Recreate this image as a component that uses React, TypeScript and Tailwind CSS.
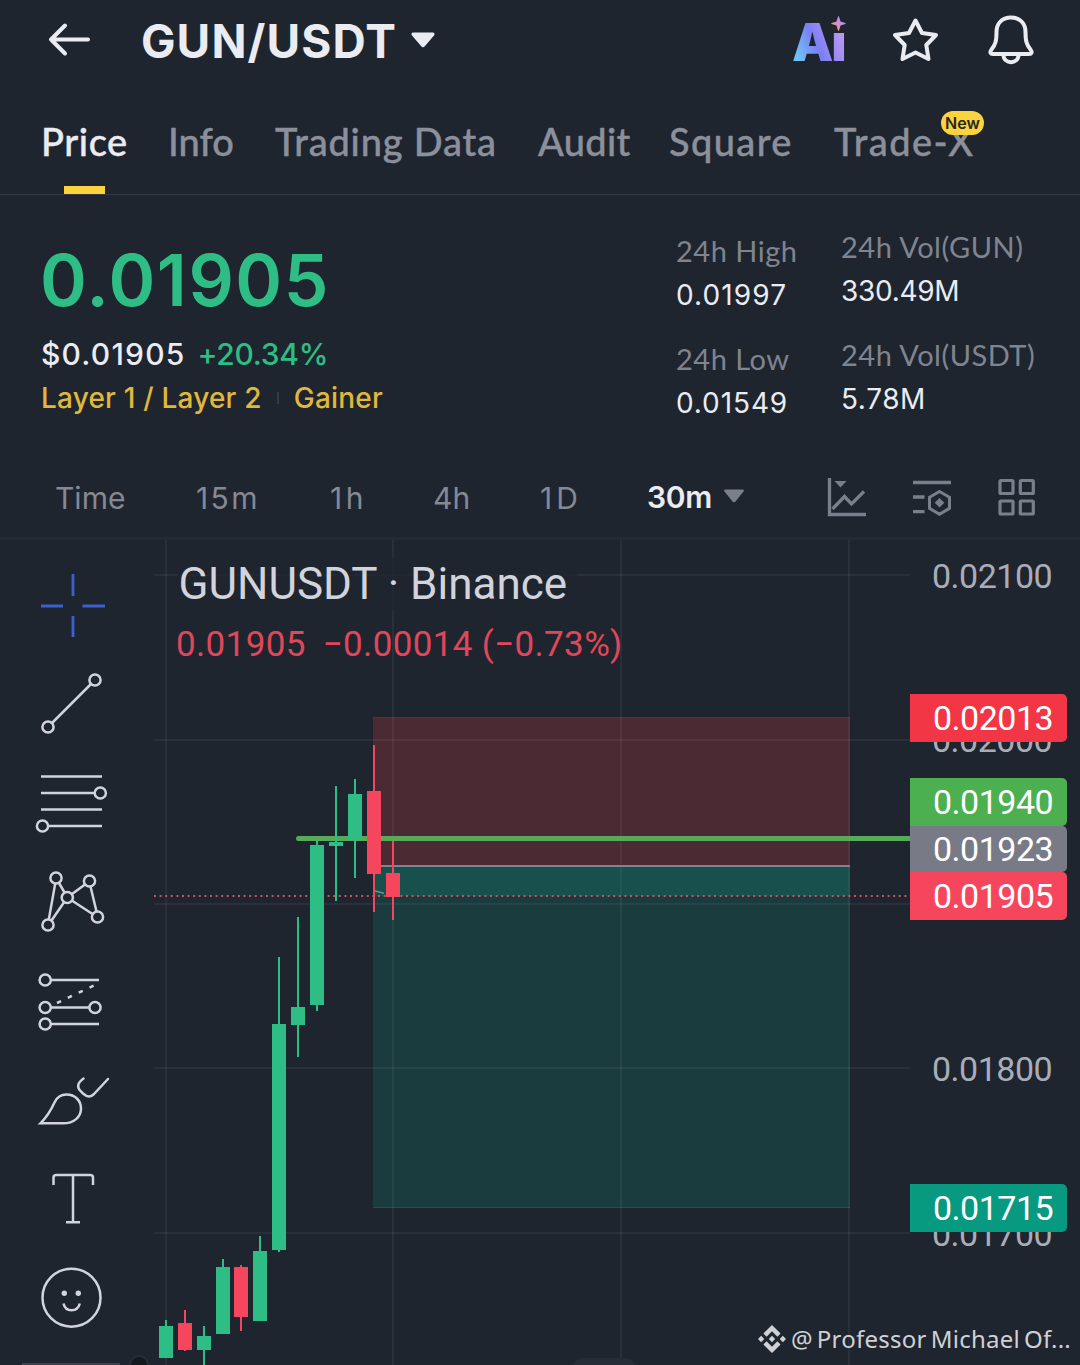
import type { ReactNode } from 'react';
import { SiBinance } from 'react-icons/si';

const tabs = [
  { label: 'Price', className: 'w-[86px] tracking-[0.6px] text-[#eaecf2]' },
  { label: 'Info', className: 'w-[66px] text-[#8b909b]' },
  { label: 'Trading Data', className: 'w-[222px] tracking-[0.8px] text-[#8b909b]' },
  { label: 'Audit', className: 'w-[90px] tracking-[0.3px] text-[#8b909b]' },
  { label: 'Square', className: 'w-[124px] tracking-[1.4px] text-[#8b909b]' },
  { label: 'Trade-X', className: 'w-[140px] tracking-[1.4px] text-[#8b909b]', badge: 'New' },
];

const intervals = [
  { label: 'Time', className: 'w-[141px]' },
  { label: '15m', className: 'w-[134px] tracking-[2.4px]' },
  { label: '1h', className: 'w-[103px] tracking-[3.5px]' },
  { label: '4h', className: 'w-[107px]' },
  { label: '1D', className: 'w-[107px] tracking-[4px]' },
];

// x centre, wick top, body top, body bottom, wick bottom
const candles = [
  { x: 12, high: 780, top: 786, bottom: 818, low: 818, up: true },
  { x: 31, high: 770, top: 783, bottom: 810, low: 811, up: false },
  { x: 50, high: 786, top: 796, bottom: 810, low: 825, up: true },
  { x: 69, high: 719, top: 727, bottom: 794, low: 794, up: true },
  { x: 87, high: 725, top: 727, bottom: 777, low: 791, up: false },
  { x: 106, high: 696, top: 711, bottom: 781, low: 781, up: true },
  { x: 125, high: 417, top: 484, bottom: 710, low: 712, up: true },
  { x: 144, high: 377, top: 467, bottom: 485, low: 517, up: true },
  { x: 163, high: 299, top: 305, bottom: 465, low: 471, up: true },
  { x: 182, high: 246, top: 302, bottom: 306, low: 361, up: true },
  { x: 201, high: 239, top: 254, bottom: 300, low: 338, up: true },
  { x: 220, high: 205, top: 251, bottom: 334, low: 372, up: false },
  { x: 239, high: 301, top: 333, bottom: 357, low: 380, up: false },
];

const axisLabels = [
  { value: '0.02100', className: 'top-[12px]' },
  { value: '0.02000', className: 'top-[176px]' },
  { value: '0.01800', className: 'top-[505px]' },
  { value: '0.01700', className: 'top-[670px]' },
];

const priceTags = [
  { value: '0.02013', className: 'top-[154px] h-12 bg-[#f23645]' },
  { value: '0.01940', className: 'top-[238px] h-12 bg-[#4caf50]' },
  { value: '0.01923', className: 'top-[286px] h-[46px] bg-[#787b86]' },
  { value: '0.01905', className: 'top-[332px] h-12 bg-[#f6465d]' },
  { value: '0.01715', className: 'top-[644px] h-12 bg-[#089981]' },
];

function Tool({ children }: { children: ReactNode }) {
  return (
    <svg
      className="w-20 h-[99px] shrink-0"
      viewBox="0 0 80 99"
      fill="none"
      stroke="#d1d4dc"
      strokeWidth={2.5}
    >
      {children}
    </svg>
  );
}

function Toolbar() {
  return (
    <aside className="relative w-[154px] shrink-0 pl-8 pt-4 flex flex-col overflow-hidden">
      {/* Crosshair */}
      <Tool>
        <path d="M41 18v22M41 60v21M9 50h22M50.500 50h22.500" stroke="#3d5fd0" strokeWidth={2.8} />
      </Tool>
      {/* Trend line */}
      <Tool>
        <path d="M20 68L59 29" />
        <circle cx="63" cy="25" r="5.600" />
        <circle cx="16" cy="72" r="5.600" />
      </Tool>
      {/* Fib retracement */}
      <Tool>
        <path d="M9 22.500h61M9 39h53.500M9 55.500h61M16 72h54" />
        <circle cx="68.300" cy="39" r="5.600" />
        <circle cx="10.500" cy="72" r="5.600" />
      </Tool>
      {/* Pattern */}
      <Tool>
        <path d="M23.200 30.600L16.800 66.500M27 30L32.500 39.500M53 31.500L40 41M58.500 33.500L64.500 58.500M40.200 47.700L60.500 61M32.200 49L19.500 67.500" />
        <circle cx="24" cy="25" r="5.600" />
        <circle cx="57.500" cy="28" r="5.600" />
        <circle cx="35.300" cy="44.500" r="5.600" />
        <circle cx="65.500" cy="64" r="5.600" />
        <circle cx="16" cy="72" r="5.600" />
      </Tool>
      {/* Position */}
      <Tool>
        <path d="M18.500 28H67M18.500 55.500h39M18.500 72H67" />
        <path d="M25 51L63 33" strokeDasharray="4.500 7.500" />
        <circle cx="13.200" cy="28" r="5.600" />
        <circle cx="13.200" cy="55.500" r="5.600" />
        <circle cx="63" cy="55.500" r="5.600" />
        <circle cx="13.200" cy="72" r="5.600" />
      </Tool>
      {/* Brush */}
      <Tool>
        <path d="M8.500 72.300C17 64 20 57 22.500 51.500C25 46 29 43.500 34.500 43.500C43 43.500 49 49.500 49 57.500C49 66 42 72.300 31 72.300Z" />
        <path d="M51.500 27.500C45 32.500 45 36 48.500 40L51 42.500C55.500 46.500 58.500 46.500 62 43L76 28" strokeLinecap="round" />
      </Tool>
      {/* Text */}
      <Tool>
        <path d="M21.500 35V27.500Q21.500 25 24.500 25H58Q61 25 61 27.500V35M41 25V72M34 72.200H48" />
      </Tool>
      {/* Emoji */}
      <Tool>
        <circle cx="39.500" cy="48.700" r="29" />
        <circle cx="32.300" cy="44.300" r="2.700" fill="#d1d4dc" stroke="none" />
        <circle cx="46.300" cy="44.300" r="2.700" fill="#d1d4dc" stroke="none" />
        <path d="M31.500 54.500C33.500 63.500 45.500 63.500 47.800 54.500" />
      </Tool>
      <div className="absolute left-[22px] bottom-0 w-[98px] h-0.5 bg-[#3d424e]" />
      <div className="absolute left-[129px] -bottom-[10px] w-5 h-5 rounded-full bg-[#14181f] border-2 border-[#282e39]" />
    </aside>
  );
}

function Plot() {
  return (
    <div className="relative w-[756px] shrink-0 overflow-hidden">
      <svg className="block w-[756px] h-[825px]" viewBox="0 0 756 825">
        {/* Profit / loss zones */}
        <rect x="219" y="177" width="477" height="149" fill="#4b2a34" />
        <rect x="219" y="326" width="477" height="342" fill="#1b3c3f" />
        <rect x="219" y="326" width="477" height="30" fill="#18504d" />
        <path d="M219 177.500h477" stroke="#5a2f3a" />
        <path d="M219 667.500h477" stroke="#1d524f" />

        {/* Grid */}
        <g stroke="#ffffff" strokeOpacity="0.07" strokeWidth="1.500">
          <path d="M12 0V825M239 0V825M467 0V825M695 0V825" />
          <path d="M0 35H756M0 200H756M0 364H756M0 528H756M0 693H756" />
        </g>

        <path d="M226 326h470" stroke="#7e858c" strokeWidth="1.800" />
        <path d="M221 351l9 2.200" stroke="#6f8f92" strokeWidth="1.500" />
        <path d="M144.500 298.500H756" stroke="#56aa58" strokeWidth="5" strokeLinecap="round" />
        <path d="M0 356H754" stroke="#c9505f" strokeWidth="2" strokeDasharray="2 3.600" />

        {candles.map((c) => (
          <g key={c.x} fill={c.up ? '#2ebd85' : '#f6465d'}>
            <rect x={c.x - 1} y={c.high} width={2} height={c.low - c.high} />
            <rect x={c.x - 7} y={c.top} width={14} height={c.bottom - c.top} />
          </g>
        ))}
      </svg>

      {/* Legend, its plate hides the grid line behind the title */}
      <div className="absolute left-[23px] top-0 font-['Roboto',sans-serif] whitespace-nowrap">
        <div className="mt-[17px] pl-[1.5px] w-[400px] h-[54px] leading-[54px] text-[44px] text-[#d1d4dc] bg-[#1f252f]/70">GUNUSDT · Binance</div>
        <div className="mt-[10px] -ml-px h-12 leading-[48px] text-[35px] tracking-[0.35px] text-[#e0475b] flex gap-[17px]">
          <span>0.01905</span>
          <span>−0.00014 (−0.73%)</span>
        </div>
      </div>
      <div className="absolute left-[418px] -bottom-[20px] w-16 h-[27px] rounded-xl bg-[#272d37]" />
    </div>
  );
}

function PriceAxis() {
  return (
    <div className="relative flex-1 font-['Roboto',sans-serif] text-[34px] tracking-[-0.5px]">
      {axisLabels.map((l) => (
        <span key={l.value} className={`absolute left-[22px] h-12 leading-[48px] text-[#a9adb8] ${l.className}`}>
          {l.value}
        </span>
      ))}
      {priceTags.map((t) => (
        <span
          key={t.value}
          className={`absolute left-0 w-[157px] pl-[23px] flex items-center rounded-r-[5px] text-white ${t.className}`}
        >
          {t.value}
        </span>
      ))}
    </div>
  );
}

function Stat({ label, value, spacing }: { label: string; value: string; spacing: string }) {
  return (
    <div className="h-[108px]">
      <div className="h-[42px] leading-[41px] text-[29px] text-[#7f848f] font-['Lato',sans-serif] tracking-[0.5px]">{label}</div>
      <div className={`h-[43px] leading-[46px] text-[28px] text-[#eaecf2] ${spacing}`}>{value}</div>
    </div>
  );
}

export default function App() {
  return (
    <div className="relative w-[1080px] h-[1365px] overflow-hidden bg-[#1f252f] font-['Inter',sans-serif] whitespace-nowrap">
      {/* Header */}
      <header className="h-20 flex items-center pl-[47px]">
        <svg className="w-[46px] h-10" viewBox="0 0 46 40" fill="none" stroke="#eaecf2" strokeWidth={4} strokeLinecap="round" strokeLinejoin="round">
          <path d="M41 19.500H4M18 5.500L4 19.500L18 33.500" />
        </svg>
        <h1 className="ml-[48px] w-[255px] pt-px text-[46px] leading-[80px] font-bold tracking-[1.1px] text-[#eaecf2]">GUN/USDT</h1>
        <svg className="ml-[15px] w-6 h-4" viewBox="0 0 24 16" fill="#eaecf2">
          <path d="M2 0.500H22Q24.500 1 23 3.500L14 14Q12 16.500 10 14L1 3.500Q-0.500 1 2 0.500Z" />
        </svg>

        <div className="relative ml-[357px] w-[54px] h-[52px] -mt-px" aria-label="Ai">
          <span className="block text-[52px] leading-[58px] font-black tracking-[-2px] text-transparent bg-clip-text bg-linear-65 from-[#6cc4f5] from-15% via-[#7b7ff5] via-45% to-[#c79cf0] to-90%">
            Aı
          </span>
          <svg className="absolute left-[39px] top-0.5 w-[15px] h-[15px]" viewBox="0 0 15 15">
            <defs>
              <linearGradient id="spark" x1="0" y1="1" x2="1" y2="0">
                <stop offset="0.250" stopColor="#f0908c" />
                <stop offset="0.600" stopColor="#c48fe6" />
                <stop offset="1" stopColor="#8f86f2" />
              </linearGradient>
            </defs>
            <path d="M7.500 0Q8 0 9.500 5.500Q15 7 15 7.500Q15 8 9.500 9.500Q8 15 7.500 15Q7 15 5.500 9.500Q0 8 0 7.500Q0 7 5.500 5.500Q7 0 7.500 0Z" fill="url(#spark)" />
          </svg>
        </div>
        <svg className="ml-[45px] w-[48px] h-[50px] -mt-0.5" viewBox="0 0 48 50" fill="none" stroke="#eaecf2" strokeWidth={4} strokeLinejoin="round">
          <path d="M24.500 6.500L31 19L45 21L35.300 31L37.500 45L24.500 38.500L11.500 45L13.700 31L4 21L18 19Z" />
        </svg>
        <svg className="ml-[47px] w-[50px] h-[52px] -mt-0.5" viewBox="0 0 50 52" fill="none" stroke="#eaecf2" strokeWidth={4}>
          <path d="M25 4.500C15.500 4.500 10.500 11 10.500 19C10.500 28 9.500 31.500 5.500 36.500C3.500 39.500 4.500 41 7 41H43C45.500 41 46.500 39.500 44.500 36.500C40.500 31.500 39.500 28 39.500 19C39.500 11 34.500 4.500 25 4.500Z" />
          <path d="M17.500 42C17.500 51.500 32.500 51.500 32.500 42" />
        </svg>
      </header>

      {/* Tabs */}
      <nav className="h-[115px] border-b border-[#333944] flex gap-[41px] pl-[41px] pt-[31px] text-[38px] leading-[60px] font-medium font-['Lato',sans-serif]">
        {tabs.map((tab, i) => (
          <div key={tab.label} className={`relative ${tab.className}`}>
            <span className="[-webkit-text-stroke:0.4px_currentColor]">{tab.label}</span>
            {i === 0 && <div className="absolute left-[23px] bottom-0 w-[41px] h-2 bg-[#fad33f]" />}
            {tab.badge && (
              <span className="absolute left-[107px] top-0 w-[43px] h-6 rounded-full bg-[#fad33f] text-center text-[16px] leading-6 tracking-normal font-semibold font-['Inter',sans-serif] text-[#2a2618]">
                {tab.badge}
              </span>
            )}
          </div>
        ))}
      </nav>

      {/* Ticker */}
      <section className="h-[263px] flex pl-[41px]">
        <div className="w-[635px] pt-[42px]">
          <div className="-ml-px h-[86px] leading-[86px] text-[71px] font-semibold tracking-[1.5px] text-[#2ebd85]">0.01905</div>
          <div className="mt-[9px] h-11 leading-[44px] text-[30px] font-medium flex gap-3">
            <span className="tracking-[1.2px] text-[#eaecf2]">$0.01905</span>
            <span className="tracking-[-0.3px] text-[#2ebd85]">+20.34%</span>
          </div>
          <div className="h-11 text-[28px] font-medium tracking-[0.2px] text-[#e0b83c] flex items-center">
            <span>Layer 1 / Layer 2</span>
            <span className="mx-[15px] w-0.5 h-3 bg-[#363c47]" />
            <span>Gainer</span>
          </div>
        </div>
        <div className="w-[165px] pt-[35px]">
          <Stat label="24h High" value="0.01997" spacing="tracking-[1.1px]" />
          <Stat label="24h Low" value="0.01549" spacing="tracking-[0.9px]" />
        </div>
        <div className="pt-[31px]">
          <Stat label="24h Vol(GUN)" value="330.49M" spacing="tracking-[-0.3px]" />
          <Stat label="24h Vol(USDT)" value="5.78M" spacing="tracking-[0.6px]" />
        </div>
      </section>

      {/* Intervals */}
      <div className="h-[82px] border-b-[3px] border-[#252b35] flex items-center pl-[55px] text-[30px] text-[#848993]">
        {intervals.map((it) => (
          <span key={it.label} className={`pt-0.5 ${it.className}`}>{it.label}</span>
        ))}
        <span className="w-[77px] font-semibold tracking-[-0.3px] text-[#eaecf2]">30m</span>
        <svg className="w-5 h-[14px] -mt-1" viewBox="0 0 20 14" fill="#7a808b">
          <path d="M1 0.500H19Q20.500 1 19.500 2.500L11.500 12.500Q10 14 8.500 12.500L0.500 2.500Q-0.500 1 1 0.500Z" />
        </svg>
        <svg className="ml-[82px] w-[42px] h-[42px] -mt-0.5" viewBox="0 0 42 42" fill="none" stroke="#7a808b" strokeWidth={3.3}>
          <path d="M3.500 2V38.500H40" />
          <path d="M6.500 33L18.500 20.500L25.500 28L38 15.500" />
          <path d="M8.500 5H20.500L14.500 11.500Z" fill="#7a808b" stroke="none" />
        </svg>
        <svg className="ml-[43px] w-[42px] h-[42px] -mt-0.5" viewBox="0 0 42 42" fill="none" stroke="#7a808b" strokeWidth={3.3}>
          <path d="M2 6.500H40M2 21H13.500M2 35.700H13.500" />
          <path d="M28.500 15.500L38.500 21.300V32.300L28.500 38.300L18.500 32.300V21.300Z" strokeWidth={3} />
          <path d="M28.500 22L33.300 26.800L28.500 31.600L23.700 26.800Z" fill="#7a808b" stroke="none" />
        </svg>
        <svg className="ml-[43px] w-[42px] h-[42px] -mt-0.5" viewBox="0 0 42 42" fill="none" stroke="#7a808b" strokeWidth={3.2}>
          <rect x="4" y="4.500" width="13" height="13" rx="1" />
          <rect x="24.300" y="4.500" width="13" height="13" rx="1" />
          <rect x="4" y="25" width="13" height="13" rx="1" />
          <rect x="24.300" y="25" width="13" height="13" rx="1" />
        </svg>
      </div>

      {/* Chart */}
      <main className="h-[825px] flex">
        <Toolbar />
        <Plot />
        <PriceAxis />
      </main>

      {/* Watermark */}
      <div className="absolute left-[758px] top-[1322px] h-[34px] flex items-center gap-[5px] font-['Noto_Sans',sans-serif] text-[24px] text-[#cfd1d5]">
        <SiBinance className="w-[28px] h-[28px]" />
        <span className="tracking-[0.25px] [word-spacing:-2.5px]">@ Professor Michael Of...</span>
      </div>
    </div>
  );
}
